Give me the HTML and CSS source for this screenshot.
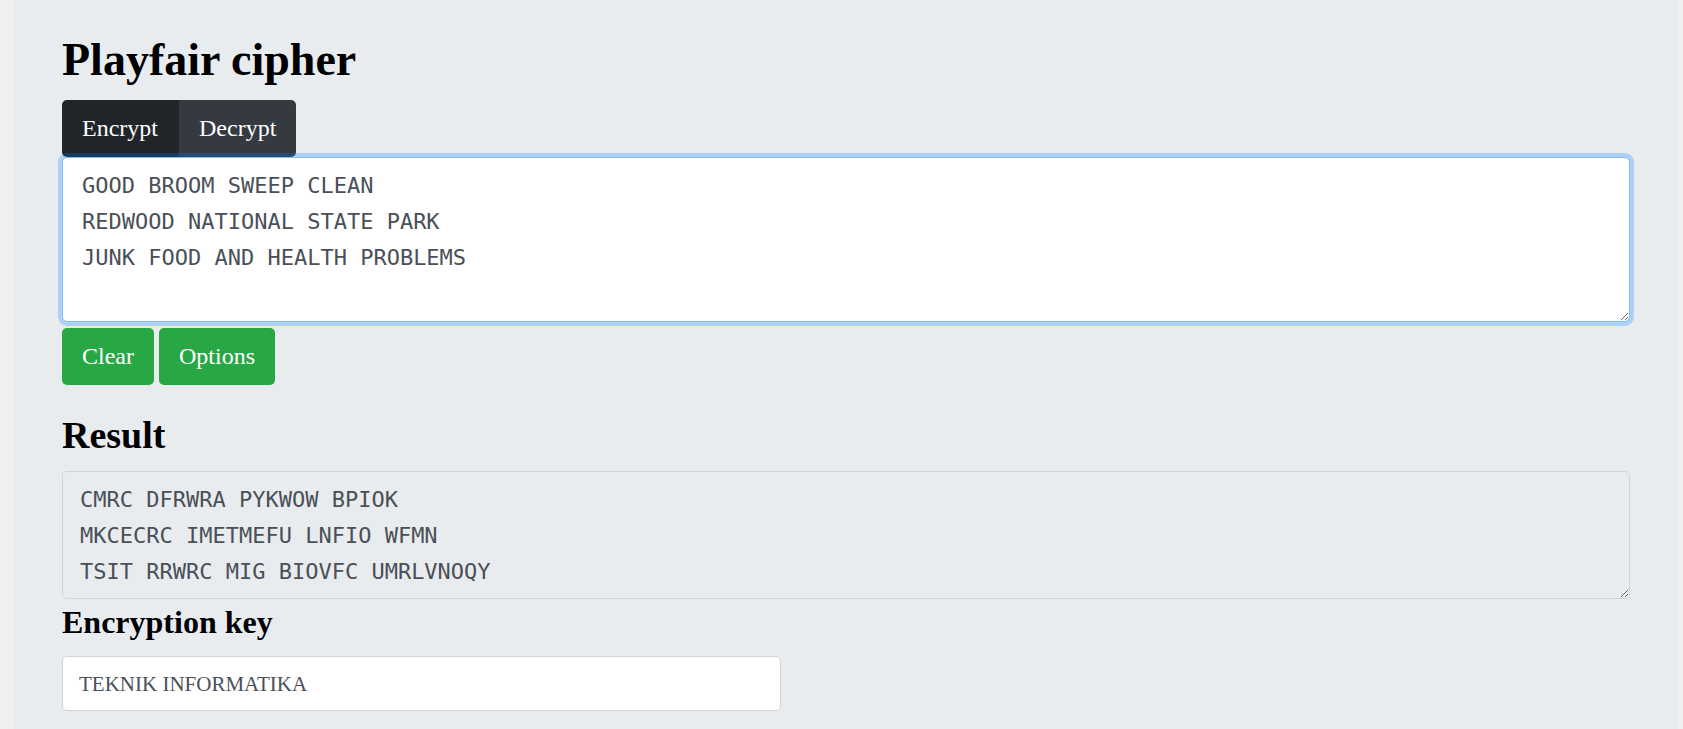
FILE: index.html
```html
<!DOCTYPE html>
<html lang="en">
<head>
<meta charset="utf-8">
<title>Playfair cipher</title>
<link rel="stylesheet" href="styles.css">
</head>
<body>
<main class="page">
  <h1 class="title">Playfair cipher</h1>
  <div class="tabs">
    <button class="tab tab-active" type="button">Encrypt</button>
    <button class="tab" type="button">Decrypt</button>
  </div>
  <textarea class="field field-input field-focus" rows="4" spellcheck="false">GOOD BROOM SWEEP CLEAN
REDWOOD NATIONAL STATE PARK
JUNK FOOD AND HEALTH PROBLEMS</textarea>
  <div class="actions">
    <button class="btn-green" type="button">Clear</button>
    <button class="btn-green" type="button">Options</button>
  </div>
  <h2 class="section-title">Result</h2>
  <textarea class="field field-result" rows="3" readonly spellcheck="false">CMRC DFRWRA PYKWOW BPIOK
MKCECRC IMETMEFU LNFIO WFMN
TSIT RRWRC MIG BIOVFC UMRLVNOQY</textarea>
  <h3 class="key-title">Encryption key</h3>
  <input class="key-input" type="text" value="TEKNIK INFORMATIKA" spellcheck="false">
</main>
</body>
</html>
```

FILE: styles.css
```css
html, body {
  margin: 0;
  padding: 0;
}

body {
  background: #f0f0f0;
  font-family: "Liberation Serif", "Times New Roman", serif;
  color: #000;
  height: 729px;
  overflow: hidden;
}

.page {
  margin-left: 14px;
  width: 1664px;
  height: 729px;
  padding: 32px 48px 0;
  background: #e9ecef;
  box-sizing: border-box;
  display: flex;
  flex-direction: column;
  align-items: flex-start;
}

.title {
  margin: 0 0 12px;
  font-size: 46px;
  line-height: 56px;
  font-weight: 700;
}

.tabs {
  display: flex;
  border-radius: 5px;
  overflow: hidden;
  flex-shrink: 0;
}

.tab {
  height: 57px;
  padding: 0 20px;
  border: 0;
  margin: 0;
  font-family: "Liberation Serif", "Times New Roman", serif;
  font-size: 24px;
  color: #fff;
  background: #343a40;
}

.tab-active {
  background: #212529;
  padding: 0 21px 0 20px;
  width: 117px;
}

.field {
  display: block;
  width: 100%;
  box-sizing: border-box;
  margin: 0;
  flex-shrink: 0;
  font-family: "DejaVu Sans Mono", "Liberation Mono", monospace;
  font-size: 22px;
  line-height: 36px;
  color: #495057;
  border: 1px solid #d0d4d8;
  border-radius: 5px;
  outline: none;
}

.field-input {
  height: 165px;
  padding: 10px 19px;
  background: #fff;
}

.field-focus {
  border-color: #80bdff;
  box-shadow: 0 0 0 4px rgba(0, 123, 255, 0.25);
}

.actions {
  display: flex;
  gap: 5px;
  margin-top: 6px;
  flex-shrink: 0;
}

.btn-green {
  height: 57px;
  padding: 0 20px;
  border: 0;
  border-radius: 5px;
  background: #28a745;
  color: #fff;
  font-family: "Liberation Serif", "Times New Roman", serif;
  font-size: 24px;
}

.section-title {
  margin: 27px 0 13px;
  font-size: 38px;
  line-height: 46px;
  font-weight: 700;
  flex-shrink: 0;
}

.field-result {
  height: 128px;
  padding: 10px 17px;
  background: #e9ecef;
}

.key-title {
  margin: 3px 0 14px;
  font-size: 32px;
  line-height: 40px;
  font-weight: 700;
  flex-shrink: 0;
}

.key-input {
  display: block;
  width: 719px;
  height: 55px;
  box-sizing: border-box;
  margin: 0;
  flex-shrink: 0;
  padding: 2px 16px 0;
  border: 1px solid #d0d4d8;
  border-radius: 5px;
  background: #fff;
  font-family: "Liberation Serif", "Times New Roman", serif;
  font-size: 21px;
  color: #495057;
  outline: none;
}
```
